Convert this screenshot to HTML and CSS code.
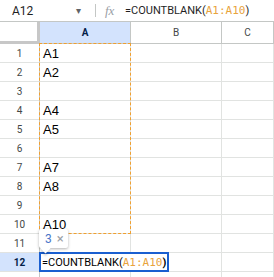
FILE: index.html
```html
<!DOCTYPE html>
<html>

<head>
    <title>Sheet</title>
    <link rel="stylesheet" href="styles.css">
</head>

<body>
    <div id="formulabar">
        <div class="namebox">
            <span>A12</span>
            <span class="caret">&#9662;</span>
        </div>
        <div class="sep"></div>
        <div class="fx">fx</div>
        <div class="formula">=COUNTBLANK(<span class="ref">A1:A10</span>)</div>
    </div>

    <div id="stack">
        <div class="grid">
            <div class="corner"></div>
            <div class="colhead active">A</div>
            <div class="colhead">B</div>
            <div class="colhead">C</div>

            <div class="rowhead">1</div><div class="cell">A1</div><div class="cell"></div><div class="cell"></div>
            <div class="rowhead">2</div><div class="cell">A2</div><div class="cell"></div><div class="cell"></div>
            <div class="rowhead">3</div><div class="cell"></div><div class="cell"></div><div class="cell"></div>
            <div class="rowhead">4</div><div class="cell">A4</div><div class="cell"></div><div class="cell"></div>
            <div class="rowhead">5</div><div class="cell">A5</div><div class="cell"></div><div class="cell"></div>
            <div class="rowhead">6</div><div class="cell"></div><div class="cell"></div><div class="cell"></div>
            <div class="rowhead">7</div><div class="cell">A7</div><div class="cell"></div><div class="cell"></div>
            <div class="rowhead">8</div><div class="cell">A8</div><div class="cell"></div><div class="cell"></div>
            <div class="rowhead">9</div><div class="cell"></div><div class="cell"></div><div class="cell"></div>
            <div class="rowhead">10</div><div class="cell">A10</div><div class="cell"></div><div class="cell"></div>
            <div class="rowhead">11</div><div class="cell"></div><div class="cell"></div><div class="cell"></div>
            <div class="rowhead active">12</div><div class="cell"></div><div class="cell"></div><div class="cell"></div>
            <div class="rowhead"></div><div class="cell"></div><div class="cell"></div><div class="cell"></div>
        </div>

        <!-- overlay layer: range highlight and in-cell editor -->
        <div class="grid overlay">
            <div class="range"></div>
            <div class="editor">
                <div class="tip"><span class="tipval">3</span><span class="tipx">&#215;</span></div>
                =COUNTBLANK(<span class="ref">A1:A10</span><b>)</b><span class="cursor"></span>
            </div>
        </div>
    </div>
</body>

</html>
```

FILE: styles.css
```css
body {
    margin: 0;
    padding: 0;
    background-color: white;
    font-family: Roboto, "Liberation Sans", sans-serif;
    color: #1f1f1f;
    overflow: hidden;
}

#formulabar {
    height: 21px;
    display: flex;
    align-items: center;
    border-bottom: 1px solid #c4c7c5;
    font-size: 11px;
}

.namebox {
    width: 86px;
    box-sizing: border-box;
    padding-left: 12px;
    padding-right: 5px;
    display: flex;
    justify-content: space-between;
    align-items: center;
    font-size: 12px;
}

.caret {
    color: #5f6368;
    font-size: 10px;
}

.sep {
    width: 1px;
    height: 13px;
    background-color: #c4c7c5;
    margin-left: 9px;
}

.fx {
    margin-left: 9px;
    width: 12px;
    font-family: "Liberation Serif", serif;
    font-style: italic;
    font-size: 13px;
    color: #9aa0a6;
}

.formula {
    margin-left: 8px;
    white-space: nowrap;
}

.ref {
    font-family: "DejaVu Sans Mono", monospace;
    color: #e8a33d;
}

#stack {
    display: grid;
}

.grid {
    grid-area: 1 / 1;
    display: grid;
    grid-template-columns: 40px 91px 91px 1fr;
    grid-template-rows: 22px repeat(13, 19px);
}

.overlay {
    pointer-events: none;
}

.corner {
    border-right: 3px solid #c7c7c7;
    border-bottom: 3px solid #c7c7c7;
}

.colhead {
    display: flex;
    align-items: center;
    justify-content: center;
    font-size: 10px;
    color: #444746;
    border-right: 1px solid #c4c7c5;
    border-bottom: 1px solid #c4c7c5;
}

.colhead.active,
.rowhead.active {
    background-color: #d3e3fd;
    font-weight: bold;
    color: #041e49;
}

.rowhead {
    display: flex;
    align-items: center;
    justify-content: center;
    font-size: 10px;
    color: #444746;
    border-right: 1px solid #c4c7c5;
    border-bottom: 1px solid #e1e3e1;
}

.cell {
    display: flex;
    align-items: flex-end;
    padding: 0 3px 1px 3px;
    font-family: "Liberation Sans", Arial, sans-serif;
    font-size: 13px;
    color: black;
    border-right: 1px solid #e1e3e1;
    border-bottom: 1px solid #e1e3e1;
}

.range {
    grid-column: 2;
    grid-row: 2 / 12;
    border: 1px dashed #f0a030;
    margin-left: -1px;
    margin-top: -1px;
}

.editor {
    grid-column: 2 / 4;
    grid-row: 13;
    justify-self: start;
    width: 130px;
    box-sizing: border-box;
    margin-left: -1px;
    margin-top: -1px;
    height: 20px;
    border: 2px solid #1a5fd0;
    background-color: white;
    display: flex;
    align-items: center;
    padding-left: 1px;
    font-size: 11px;
    color: black;
    white-space: nowrap;
    position: relative;
}

.editor b {
    font-weight: bold;
}

.cursor {
    width: 1px;
    height: 13px;
    background-color: black;
    margin-left: 1px;
}

.tip {
    position: absolute;
    left: -2px;
    bottom: 22px;
    width: 29px;
    height: 19px;
    box-sizing: border-box;
    padding-left: 6px;
    display: flex;
    align-items: center;
    gap: 5px;
    background-color: white;
    border-radius: 2px;
    box-shadow: 0 1px 3px rgba(0, 0, 0, 0.3);
    font-size: 12px;
}

.tip::after {
    content: "";
    position: absolute;
    left: 3px;
    bottom: -4px;
    width: 7px;
    height: 7px;
    background-color: white;
    transform: rotate(45deg);
    box-shadow: 2px 2px 2px rgba(0, 0, 0, 0.15);
}

.tipval {
    color: #4a76c9;
}

.tipx {
    color: #9aa0a6;
    font-size: 13px;
}
```
